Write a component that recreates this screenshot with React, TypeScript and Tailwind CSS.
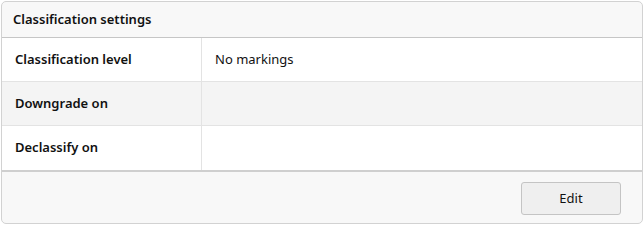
import React from "react";

const rows = [
  { label: "Classification level", value: "No markings", bg: "bg-white" },
  { label: "Downgrade on", value: "", bg: "bg-[#f4f4f4]" },
  { label: "Declassify on", value: "", bg: "bg-white" },
];

export default function App() {
  return (
    <div className="w-[644px] h-[227px] bg-white p-px" style={{ fontFamily: '"Segoe UI", "Noto Sans", "Open Sans", sans-serif' }}>
      <div className="h-[223px] flex flex-col border border-[#d2d2d2] rounded-[5px] overflow-hidden bg-[#f8f8f8]">
        <div className="h-[36px] shrink-0 flex items-center px-[11px] text-[13px] font-semibold text-[#111] border-b border-[#c6c6c6]">
          Classification settings
        </div>
        <div className="flex flex-col border-b-2 border-[#cfcfcf]">
          {rows.map((r, i) => (
            <div
              key={r.label}
              className={`flex h-[44px] ${r.bg} ${i < rows.length - 1 ? "border-b border-[#e3e3e3]" : ""}`}
            >
              <div className="w-[200px] shrink-0 flex items-center pl-[13px] text-[13px] font-semibold text-[#111] border-r border-[#e3e3e3]">
                {r.label}
              </div>
              <div className="flex-1 flex items-center pl-[13px] text-[13px] text-[#111]">{r.value}</div>
            </div>
          ))}
        </div>
        <div className="flex-1 flex items-start justify-end pt-[10px] pr-[21px]">
          <button className="w-[100px] h-[33px] bg-[#efefef] border border-[#c4c4c4] rounded-[3px] text-[13px] text-[#111]">
            Edit
          </button>
        </div>
      </div>
    </div>
  );
}
